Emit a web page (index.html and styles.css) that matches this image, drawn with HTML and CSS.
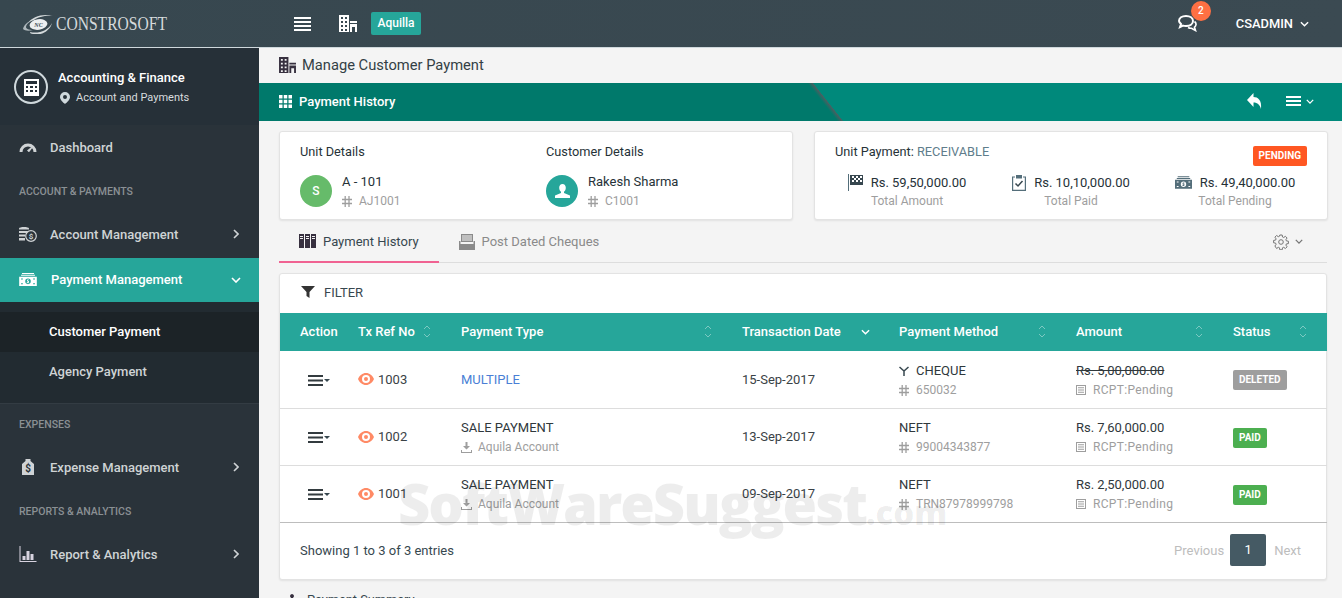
FILE: index.html
```html
<!DOCTYPE html>
<html lang="en">
<head>
<meta charset="utf-8">
<title>Manage Customer Payment</title>
<link rel="stylesheet" href="styles.css">
</head>
<body>
<svg class="defs" width="0" height="0" aria-hidden="true">
  <symbol id="bars" viewBox="0 0 15 11"><path d="M0 0h15v2H0zM0 4.500h15v2H0zM0 9h15v2H0z"/></symbol>
  <symbol id="hash" viewBox="0 0 10 11"><path d="M3.200 0v11M7 0v11M0 3.500h10M0 7.500h10" fill="none" stroke="currentColor" stroke-width="1.300"/></symbol>
  <symbol id="chev-d" viewBox="0 0 10 6"><path d="M1 1l4 4 4-4" fill="none" stroke="currentColor" stroke-width="1.600"/></symbol>
  <symbol id="chev-r" viewBox="0 0 6 10"><path d="M1 1l4 4-4 4" fill="none" stroke="currentColor" stroke-width="1.600"/></symbol>
  <symbol id="sort" viewBox="0 0 8 13"><path d="M1 4l3-3 3 3M1 9l3 3 3-3" fill="none" stroke="currentColor" stroke-width="1"/></symbol>
  <symbol id="eye" viewBox="0 0 16 12"><path fill-rule="evenodd" d="M8 0c3.500 0 6.500 2.500 8 6-1.500 3.500-4.500 6-8 6S1.500 9.500 0 6c1.500-3.500 4.500-6 8-6zm0 2a4 4 0 100 8 4 4 0 000-8zm0 2a2 2 0 110 4 2 2 0 010-4z"/></symbol>
  <symbol id="receipt" viewBox="0 0 10 10"><path fill-rule="evenodd" d="M0 0h10v10H0zm1 1v8h8V1zm1 1.300h6v1H2zm0 2.200h6v1H2zm0 2.200h6v1H2z"/></symbol>
  <symbol id="download" viewBox="0 0 11 11"><path d="M4.500 0h2v4H9L5.500 7.500 2 4h2.500zM0 8h1v2h9V8h1v3H0z"/></symbol>
  <symbol id="building" viewBox="0 0 18 17"><path fill-rule="evenodd" d="M0 0h10v17H0zm2 2v2h2V2zm4 0v2h2V2zM2 6v2h2V6zm4 0v2h2V6zm-4 4v2h2v-2zm4 0v2h2v-2zM2 14v2h2v-2zm4 0v2h2v-2zM11 6h7v2h-7zm0 3h7v8h-2v-5h-3v5h-2z"/></symbol>
  <symbol id="cash" viewBox="0 0 19 14"><path fill-rule="evenodd" d="M3 0h13v1H3zM2 2h15v1H2zM0 4h19v10H0zm9.500 2a3 3 0 100 6 3 3 0 000-6zM2 6v1h2V6zm13 0v1h2V6zM2 11v1h2v-1zm13 0v1h2v-1z"/><path d="M9 7h1.500v.7H9.500v.8h1v2H10v.5h-1v-.5H8.200v-.7h1.300v-.6h-1v-2H9z"/></symbol>
</svg>

<header class="topbar">
  <div class="brand">
    <svg class="brand-mark" viewBox="0 0 30 20" width="30" height="20">
      <path fill="#d5dadc" d="M5 9C9 3 20-1 30 2c-7-1-15 1-19 4-3 1-5 2-6 3z"/>
      <path fill="#aeb7bb" d="M0 15C1 11 4 8 8 7c-3 2-5 4-5 6 0 2 3 3 7 3-4 1-8 1-10-1z"/>
      <path fill="#d5dadc" d="M7 18c8 2 18-1 22-9-2 8-11 13-19 11-2 0-3-1-3-2z"/>
      <ellipse cx="15.500" cy="10.500" rx="9" ry="5.300" fill="#eceff1" transform="rotate(-8 15.500 10.500)"/>
      <text x="15.500" y="13" class="brand-nc">NC</text>
    </svg>
    <span class="brand-name">CONSTROSOFT</span>
  </div>
  <svg class="ic-menu" width="17" height="14" viewBox="0 0 17 14"><path d="M0 0h17v2H0zM0 4h17v2H0zM0 8h17v2H0zM0 12h17v2H0z" fill="#fff"/></svg>
  <svg class="ic-site" width="18" height="17"><use href="#building"/></svg>
  <span class="site-tag">Aquilla</span>
  <div class="top-right">
    <span class="chat">
      <svg width="19" height="17" viewBox="0 0 19 17"><path d="M8 1c4 0 7 2 7 5s-3 5-7 5c-1 0-2 0-3-.4L2 12l1-3C2 8 1 7 1 6c0-3 3-5 7-5z" fill="none" stroke="#fff" stroke-width="2"/><path d="M16.500 6.500c1.300 1 1.700 2 1.500 3.200-.2 1.200-.8 2-1.500 2.500l1 3.300-4-2.200c-1.300.1-2.500-.2-3.500-.8" fill="none" stroke="#fff" stroke-width="1.600"/></svg>
      <b class="chat-badge">2</b>
    </span>
    <span class="user">CSADMIN</span>
    <svg class="user-chev" width="9" height="6"><use href="#chev-d"/></svg>
  </div>
</header>

<div class="shell">
  <aside class="sidebar">
    <div class="module">
      <span class="module-ring">
        <svg width="15" height="17" viewBox="0 0 15 17"><path fill="#fff" fill-rule="evenodd" d="M0 0h15v17H0zm2 2v3h11V2zm0 5v2h2V7zm4 0v2h3V7zm5 0v2h2V7zm-9 4v2h2v-2zm4 0v2h3v-2zm5 0v2h2v-2z"/></svg>
      </span>
      <div>
        <div class="module-title">Accounting &amp; Finance</div>
        <div class="module-sub">
          <svg width="10" height="12" viewBox="0 0 10 12"><path fill="#cfd8dc" fill-rule="evenodd" d="M5 0a5 5 0 015 5c0 2.500-3 5.500-5 7-2-1.500-5-4.500-5-7a5 5 0 015-5zm0 3a2 2 0 100 4 2 2 0 000-4z"/></svg>
          Account and Payments
        </div>
      </div>
    </div>

    <a class="nav-item">
      <svg class="nav-ic" width="17" height="10" viewBox="0 0 17 10"><path d="M0 10a8.500 8.500 0 0117 0h-3a5.500 5.500 0 00-11 0z" fill="#cfd3d5"/><path d="M7.500 8.500l5-4 .8.8-3.800 5z" fill="#cfd3d5"/></svg>
      <span>Dashboard</span>
    </a>
    <div class="nav-label tight">ACCOUNT &amp; PAYMENTS</div>
    <a class="nav-item">
      <svg class="nav-ic" width="18" height="15" viewBox="0 0 18 15"><path d="M0 1.500C0 .500 2.500 0 5 0s5 .500 5 1.500v1H0zM0 4h9v2H0zM0 7.500h6v2H0zM0 11h6v2.500H0z" fill="#cfd3d5"/><circle cx="12" cy="9" r="5.300" fill="#2a333a" stroke="#cfd3d5" stroke-width="1.200"/><text x="12" y="11.800" class="nav-dollar">$</text></svg>
      <span>Account Management</span>
      <svg class="nav-chev" width="6" height="10"><use href="#chev-r"/></svg>
    </a>
    <a class="nav-item active">
      <svg class="nav-ic" width="18" height="13"><use href="#cash"/></svg>
      <span>Payment Management</span>
      <svg class="nav-chev-d" width="10" height="6"><use href="#chev-d"/></svg>
    </a>
    <div class="submenu">
      <a class="sub-item current">Customer Payment</a>
      <a class="sub-item">Agency Payment</a>
    </div>
    <div class="nav-label after-sub">EXPENSES</div>
    <a class="nav-item">
      <svg class="nav-ic" width="12" height="16" viewBox="0 0 12 16"><path d="M3.500 0h5v2L12 5v11H0V5l3.500-3z" fill="#cfd3d5"/><text x="6" y="13" class="nav-dollar big">$</text></svg>
      <span>Expense Management</span>
      <svg class="nav-chev" width="6" height="10"><use href="#chev-r"/></svg>
    </a>
    <div class="nav-label tight">REPORTS &amp; ANALYTICS</div>
    <a class="nav-item">
      <svg class="nav-ic" width="17" height="16" viewBox="0 0 17 16"><path d="M0 0h1v15h16v1H0zM3 10h3v4H3zM7 5h3v9H7zM11 8h3v6h-3z" fill="#d8d4e0"/></svg>
      <span>Report &amp; Analytics</span>
      <svg class="nav-chev" width="6" height="10"><use href="#chev-r"/></svg>
    </a>
  </aside>

  <main class="main">
    <div class="page-title">
      <svg width="17" height="16"><use href="#building"/></svg>
      <span>Manage Customer Payment</span>
    </div>
    <div class="band">
      <div class="band-left">
        <svg width="13" height="13" viewBox="0 0 13 13"><path fill="#fff" d="M0 0h3.500v3.500H0zM4.750 0h3.500v3.500h-3.500zM9.500 0H13v3.500H9.500zM0 4.750h3.500v3.500H0zM4.750 4.750h3.500v3.500h-3.500zM9.500 4.750H13v3.500H9.500zM0 9.500h3.500V13H0zM4.750 9.500h3.500V13h-3.500zM9.500 9.500H13V13H9.500z"/></svg>
        <span>Payment History</span>
      </div>
      <div class="band-actions">
        <svg width="15" height="16" viewBox="0 0 15 16"><path fill="#fff" d="M6.500 0v4C11 4 15 7 14 16c-1-4-3.500-6.500-7.500-6.500V14L0 7z"/></svg>
        <svg class="band-bars" width="15" height="10" viewBox="0 0 15 10"><path fill="#fff" d="M0 0h15v2H0zM0 4h15v2H0zM0 8h15v2H0z"/></svg>
        <svg class="band-chev" width="8" height="5"><use href="#chev-d"/></svg>
      </div>
    </div>

    <div class="content">
      <section class="cards">
        <div class="card card-people">
          <div class="person">
            <h3>Unit Details</h3>
            <div class="person-row">
              <span class="avatar green">S</span>
              <div>
                <div class="primary">A - 101</div>
                <div class="secondary"><svg class="hash" width="10" height="11"><use href="#hash"/></svg>AJ1001</div>
              </div>
            </div>
          </div>
          <div class="person">
            <h3>Customer Details</h3>
            <div class="person-row">
              <span class="avatar teal"><svg width="15" height="14" viewBox="0 0 15 14"><path fill="#fff" d="M7.500 0c2 0 3.300 1.500 3.300 3.700 0 1.800-.8 3.300-1.800 4v1.300L15 11.500V14H0v-2.500L6 9V7.700c-1-.7-1.800-2.200-1.800-4C4.200 1.500 5.500 0 7.500 0z"/></svg></span>
              <div>
                <div class="primary">Rakesh Sharma</div>
                <div class="secondary"><svg class="hash" width="10" height="11"><use href="#hash"/></svg>C1001</div>
              </div>
            </div>
          </div>
        </div>
        <div class="card card-totals">
          <div class="totals-head">
            <h3>Unit Payment: <em>RECEIVABLE</em></h3>
            <span class="badge pending">PENDING</span>
          </div>
          <div class="totals">
            <div class="total">
              <div class="total-value">
                <svg width="15" height="17" viewBox="0 0 15 17"><path fill="#546e7a" d="M0 0h1v17H0z"/><path fill="#37474f" fill-rule="evenodd" d="M2 1h13v10H2zm2 1v2h2V2zm4 0v2h2V2zm4 0v2h2V2zM6 4v2h2V4zm4 0v2h2V4zM4 6v2h2V6zm4 0v2h2V6zm4 0v2h2V6z"/></svg>
                Rs. 59,50,000.00
              </div>
              <div class="total-label">Total Amount</div>
            </div>
            <div class="total">
              <div class="total-value">
                <svg width="14" height="16" viewBox="0 0 14 16"><path fill="none" stroke="#546e7a" stroke-width="1.200" d="M3 2H.6v13.400h12.800V2H11"/><path fill="#546e7a" d="M4 0h6v3.500H4z"/><path fill="none" stroke="#37474f" stroke-width="1.500" d="M3.500 8.500l2.500 2.500 4.500-5"/></svg>
                Rs. 10,10,000.00
              </div>
              <div class="total-label">Total Paid</div>
            </div>
            <div class="total">
              <div class="total-value">
                <svg class="cash-ic" width="17" height="13"><use href="#cash"/></svg>
                Rs. 49,40,000.00
              </div>
              <div class="total-label">Total Pending</div>
            </div>
          </div>
        </div>
      </section>

      <nav class="tabs">
        <a class="tab active">
          <svg width="17" height="14" viewBox="0 0 17 14"><path fill-rule="evenodd" fill="#37303f" d="M0 0h5v14H0zm1 2v1h3V2zm0 2v1h3V4zM6 0h5v14H6zm1 2v1h3V2zm0 2v1h3V4zM12 0h5v14h-5zm1 2v1h3V2zm0 2v1h3V4z"/></svg>
          Payment History
        </a>
        <a class="tab">
          <svg width="16" height="16" viewBox="0 0 16 16"><path fill="#8a8a8a" fill-rule="evenodd" d="M2 0h12v8H2zm1 1.500v1h10v-1zm0 2v1h10v-1zm0 2v1h10v-1zM0 7h1.500v3h13V7H16v9H0z"/></svg>
          Post Dated Cheques
        </a>
        <span class="tab-settings">
          <svg width="16" height="16" viewBox="0 0 16 16"><circle cx="8" cy="8" r="2.300" fill="none" stroke="#757575"/><path fill="none" stroke="#757575" d="M6.800 1h2.400l.3 2 1.200.5 1.700-1.200 1.700 1.700-1.200 1.700.5 1.200 2 .3v2.400l-2 .3-.5 1.200 1.200 1.700-1.700 1.700-1.700-1.200-1.200.5-.3 2H6.800l-.3-2-1.200-.5-1.700 1.200L1.900 12l1.200-1.700-.5-1.200-2-.3V6.400l2-.3.5-1.200L1.900 3.200l1.700-1.700 1.700 1.200 1.200-.5z"/></svg>
          <svg class="settings-chev" width="8" height="5"><use href="#chev-d"/></svg>
        </span>
      </nav>

      <section class="table-card">
        <div class="filter">
          <svg width="14" height="12" viewBox="0 0 14 12"><path fill="#333" d="M0 0h14L8.500 6v6l-3-2V6z"/></svg>
          FILTER
        </div>
        <table class="grid">
          <colgroup>
            <col class="c-action"><col class="c-ref"><col class="c-type"><col class="c-date"><col class="c-method"><col class="c-amount"><col class="c-status">
          </colgroup>
          <thead>
            <tr>
              <th>Action</th>
              <th><span class="th-in">Tx Ref No<svg class="sort" width="8" height="13"><use href="#sort"/></svg></span></th>
              <th><span class="th-in">Payment Type<svg class="sort" width="8" height="13"><use href="#sort"/></svg></span></th>
              <th><span class="th-in">Transaction Date<svg class="sort-on" width="9" height="6"><use href="#chev-d"/></svg></span></th>
              <th><span class="th-in">Payment Method<svg class="sort" width="8" height="13"><use href="#sort"/></svg></span></th>
              <th><span class="th-in">Amount<svg class="sort" width="8" height="13"><use href="#sort"/></svg></span></th>
              <th><span class="th-in last">Status<svg class="sort" width="8" height="13"><use href="#sort"/></svg></span></th>
            </tr>
          </thead>
          <tbody>
            <tr>
              <td class="act"><svg width="15" height="11"><use href="#bars"/></svg><i class="caret"></i></td>
              <td><span class="ref"><svg class="eye" width="16" height="12"><use href="#eye"/></svg>1003</span></td>
              <td><a class="link">MULTIPLE</a></td>
              <td>15-Sep-2017</td>
              <td>
                <div class="primary-cell"><svg class="fork" width="10" height="10" viewBox="0 0 10 10"><path fill="none" stroke="#37474f" stroke-width="1.500" d="M.5 1L5 5l4.500-4M5 5v5"/></svg>CHEQUE</div>
                <div class="secondary"><svg class="hash" width="10" height="11"><use href="#hash"/></svg>650032</div>
              </td>
              <td>
                <div class="primary-cell"><s>Rs. 5,00,000.00</s></div>
                <div class="secondary"><svg class="rcpt" width="10" height="10"><use href="#receipt"/></svg><span class="rcpt-text">RCPT:Pending</span></div>
              </td>
              <td><span class="badge deleted">DELETED</span></td>
            </tr>
            <tr>
              <td class="act"><svg width="15" height="11"><use href="#bars"/></svg><i class="caret"></i></td>
              <td><span class="ref"><svg class="eye" width="16" height="12"><use href="#eye"/></svg>1002</span></td>
              <td>
                <div class="primary-cell">SALE PAYMENT</div>
                <div class="secondary"><svg class="rcpt dl" width="11" height="11"><use href="#download"/></svg>Aquila Account</div>
              </td>
              <td>13-Sep-2017</td>
              <td>
                <div class="primary-cell">NEFT</div>
                <div class="secondary"><svg class="hash" width="10" height="11"><use href="#hash"/></svg>99004343877</div>
              </td>
              <td>
                <div class="primary-cell">Rs. 7,60,000.00</div>
                <div class="secondary"><svg class="rcpt" width="10" height="10"><use href="#receipt"/></svg><span class="rcpt-text">RCPT:Pending</span></div>
              </td>
              <td><span class="badge paid">PAID</span></td>
            </tr>
            <tr>
              <td class="act"><svg width="15" height="11"><use href="#bars"/></svg><i class="caret"></i></td>
              <td><span class="ref"><svg class="eye" width="16" height="12"><use href="#eye"/></svg>1001</span></td>
              <td>
                <div class="primary-cell">SALE PAYMENT</div>
                <div class="secondary"><svg class="rcpt dl" width="11" height="11"><use href="#download"/></svg>Aquila Account</div>
              </td>
              <td>09-Sep-2017</td>
              <td>
                <div class="primary-cell">NEFT</div>
                <div class="secondary"><svg class="hash" width="10" height="11"><use href="#hash"/></svg>TRN87978999798</div>
              </td>
              <td>
                <div class="primary-cell">Rs. 2,50,000.00</div>
                <div class="secondary"><svg class="rcpt" width="10" height="10"><use href="#receipt"/></svg><span class="rcpt-text">RCPT:Pending</span></div>
              </td>
              <td><span class="badge paid">PAID</span></td>
            </tr>
          </tbody>
        </table>
        <div class="table-foot">
          <span>Showing 1 to 3 of 3 entries</span>
          <div class="pager">
            <span class="pg">Previous</span>
            <span class="pg-current">1</span>
            <span class="pg">Next</span>
          </div>
        </div>
      </section>

      <div class="summary-head">
        <svg width="8" height="12" viewBox="0 0 8 12"><path fill="#37303f" d="M4 0a2 2 0 011 3.700V12H3V3.700A2 2 0 014 0z"/></svg>
        Payment Summary
      </div>
    </div>
    <div class="watermark">SoftWareSuggest<small>.com</small></div>
  </main>
</div>
</body>
</html>
```
FILE: styles.css
```css
* { box-sizing: border-box; }
html, body { margin: 0; height: 598px; overflow: hidden; }
body { font-family: Roboto, "Liberation Sans", sans-serif; font-size: 13px; color: #37474f; background: #f4f4f4; }
.defs { position: absolute; }
svg { flex: none; display: block; fill: currentColor; }
a { color: inherit; text-decoration: none; }
h3 { margin: 0; font-size: 12.750px; font-weight: 400; line-height: 15px; color: #263238; }

.topbar { height: 48px; display: flex; align-items: center; color: #fff; background: linear-gradient(90deg, #37474f 0, #3b4a52 100%); border-bottom: 1px solid #cfd8dc; }
.brand { width: 293px; display: flex; align-items: center; padding-left: 23px; gap: 3px; }
.brand-nc { font: italic 700 6px "Liberation Serif", serif; text-anchor: middle; fill: #37474f; }
.brand-name { font-family: "Liberation Serif", serif; font-size: 19.500px; color: #d5dadc; transform: scaleX(.8); transform-origin: left; }
.ic-menu { margin-left: 1px; }
.ic-site { margin-left: 28px; }
.site-tag { margin-left: 14px; height: 23px; padding: 0 6.500px; background: #26a69a; border-radius: 2px; font-size: 12px; font-weight: 500; line-height: 23px; }
.top-right { margin-left: auto; display: flex; align-items: center; padding-right: 33px; }
.chat { position: relative; margin-right: 39px; }
.chat-badge { position: absolute; left: 13px; top: -14px; width: 20px; height: 20px; border-radius: 50%; background: #ff7043; font-size: 10px; font-weight: 500; line-height: 20px; text-align: center; }
.user { font-size: 12.900px; font-weight: 500; }
.user-chev { margin-left: 7px; margin-top: 1px; }

.shell { display: flex; height: 550px; }
.sidebar { width: 259px; flex: none; background: #2a333a; color: #cfd3d5; }
.module { height: 77px; display: flex; align-items: center; gap: 10px; padding: 1px 14px 0; background: #263038; color: #fff; }
.module-ring { width: 34px; height: 34px; border: 2px solid #cfd8dc; border-radius: 50%; display: flex; align-items: center; justify-content: center; }
.module-title { font-size: 13px; font-weight: 500; }
.module-sub { display: flex; align-items: center; gap: 6px; margin-top: 6px; font-size: 11px; color: #d8dcde; padding-left: 2px; }
.nav-item { height: 44px; display: flex; align-items: center; padding: 0 19px; font-weight: 500; font-size: 13px; }
.nav-item .nav-ic { margin-right: 13px; width: 18px; }
.nav-item > span { flex: 1; }
.nav-dollar { font: 700 8px Roboto, sans-serif; text-anchor: middle; fill: #cfd3d5; }
.nav-dollar.big { fill: #2a333a; font-size: 10px; }
.nav-chev { color: #cfd3d5; margin-right: 1px; }
.nav-chev-d { color: #fff; margin-right: -1px; }
.nav-label { height: 44px; display: flex; align-items: center; padding-left: 19px; font-size: 10.500px; font-weight: 500; color: #8a9094; }
.nav-label.tight { height: 43px; padding-top: 2px; }
.nav-label.after-sub { height: 42px; border-top: 1px solid #333c43; }
.nav-item.active { background: #26a69a; color: #fff; margin-top: 2px; padding-bottom: 1px; }
.nav-item.active .nav-ic { margin-right: 14px; }
.submenu { height: 101px; padding-top: 10px; background: #222b31; }
.sub-item { height: 40px; display: flex; align-items: center; padding: 0 0 1px 49px; font-weight: 500; font-size: 13px; }
.sub-item.current { background: #1c2327; color: #fff; }

.main { flex: 1; min-width: 0; position: relative; }
.page-title { height: 35px; display: flex; align-items: center; gap: 6px; padding: 0 0 1px 20px; font-size: 14.700px; color: #333f45; }
.page-title svg { color: #37303f; }
.band { height: 38px; display: flex; align-items: center; justify-content: space-between; padding: 0 28px 2px 20px; color: #fff; background: linear-gradient(51.700deg, #00796b 0, #00796b 454px, #4d5e60 458px, #00897b 458.500px); }
.band-left { display: flex; align-items: center; gap: 7px; font-weight: 500; font-size: 13px; }
.band-actions { display: flex; align-items: center; }
.band-bars { margin-left: 24px; }
.band-chev { margin-left: 5px; }

.content { padding: 10px 15px 0 20px; }
.cards { display: flex; gap: 21px; }
.card { height: 89px; background: #fff; border: 1px solid #e3e3e3; border-radius: 3px; box-shadow: 0 1px 2px rgba(0,0,0,.08); }
.card-people { width: 514px; flex: none; display: flex; padding: 12px 0 0 20px; }
.person { width: 246px; flex: none; }
.person-row { display: flex; align-items: center; gap: 10px; margin-top: 15px; }
.avatar { width: 32px; height: 32px; border-radius: 50%; display: flex; align-items: center; justify-content: center; color: #fff; font-size: 12px; font-weight: 500; }
.avatar.green { background: #66bb6a; }
.avatar.teal { background: #26a69a; }
.primary { color: #263238; font-size: 13px; line-height: 15px; }
.secondary { display: flex; align-items: center; margin-top: 4.500px; color: #9e9e9e; font-size: 12px; line-height: 15px; }
.hash { margin-right: 7px; color: #9e9e9e; }
.card-totals { flex: 1; padding: 12px 20px 0; }
.totals-head { display: flex; justify-content: space-between; }
.totals-head em { font-style: normal; color: #607d8b; }
.badge { display: inline-block; height: 20px; padding: 0 6px; border-radius: 2px; color: #fff; font-size: 10px; font-weight: 700; line-height: 20px; }
.badge.pending { background: #ff5722; margin: 2px 0 0; }
.badge.deleted { background: #9e9e9e; margin-top: 2px; }
.badge.paid { background: #4caf50; margin-top: 2px; }
.totals { display: grid; grid-template-columns: repeat(3, 164px); margin: 8px -10px 0; }
.total { text-align: center; }
.total-value { display: flex; justify-content: center; align-items: center; gap: 8px; color: #263238; height: 17px; }
.cash-ic { color: #546e7a; }
.total-label { color: #9e9e9e; font-size: 12px; line-height: 14px; margin-top: 3px; }

.tabs { height: 42px; display: flex; align-items: stretch; margin-top: 1px; border-bottom: 1px solid #ddd; }
.tab { display: flex; align-items: center; gap: 7px; padding: 0 20px; color: #8a8a8a; }
.tab.active { color: #37474f; border-bottom: 2px solid #f06292; margin-bottom: -1px; }
.tab-settings { margin-left: auto; display: flex; align-items: center; padding-right: 24px; }
.settings-chev { margin-left: 6px; color: #757575; }

.table-card { margin-top: 10px; height: 307px; background: #fff; border: 1px solid #e3e3e3; border-radius: 3px; box-shadow: 0 1px 2px rgba(0,0,0,.08); }
.filter { height: 39px; display: flex; align-items: center; gap: 9px; padding: 0 0 3px 21px; font-size: 13px; color: #37474f; }
.grid { width: 100%; border-collapse: collapse; table-layout: fixed; }
.c-action { width: 78px; } .c-ref { width: 103px; } .c-type { width: 281px; } .c-date { width: 157px; } .c-method { width: 177px; } .c-amount { width: 157px; } .c-status { width: 94px; }
.grid th { height: 38px; padding: 0 0 1px 20px; background: #26a69a; color: #fff; font-weight: 500; font-size: 13px; text-align: left; }
.grid th + th { padding-left: 0; }
.th-in { display: flex; align-items: center; justify-content: space-between; padding-right: 30px; }
.th-in.last { padding-right: 20px; }
.sort { color: rgba(255,255,255,.4); }
.sort-on { color: #fff; margin-right: -1px; }
.grid td { height: 57px; padding: 0; border-bottom: 1px solid #ddd; color: #3a4246; font-size: 13px; vertical-align: middle; }
.grid tbody tr:last-child td { border-bottom-color: #bdbdbd; }
.grid td.act { padding-left: 28px; }
.act { white-space: nowrap; }
.act svg { display: inline-block; color: #333b3f; vertical-align: middle; }
.caret { display: inline-block; margin-left: 1px; vertical-align: middle; border: 3px solid transparent; border-top-color: #37474f; border-bottom: 0; }
.ref { display: flex; align-items: center; gap: 4px; }
.eye { color: #ff8a65; }
.link { color: #4a7fd6; }
.primary-cell { display: flex; align-items: center; margin-top: 2px; line-height: 15px; color: #2f383c; }
.primary-cell s { color: inherit; }
.fork { margin-right: 7px; }
.rcpt { margin-right: 7px; color: #9e9e9e; }
.rcpt.dl { margin-right: 6px; }
.rcpt-text { letter-spacing: .33px; }
.table-foot { height: 55px; display: flex; align-items: center; justify-content: space-between; padding: 0 25px 0 20px; }
.pager { display: flex; align-items: center; }
.pg { color: #bdbdbd; }
.pg-current { width: 36px; height: 32px; margin: 0 8px 0 6px; border-radius: 2px; background: #455a64; color: #fff; text-align: center; line-height: 32px; font-size: 13px; }

.summary-head { display: flex; align-items: center; gap: 11px; margin-top: 12px; padding-left: 9px; font-size: 12.750px; color: #37474f; }

.watermark { position: absolute; left: 139px; top: 425px; font-family: "Open Sans", sans-serif; font-weight: 800; font-size: 56px; letter-spacing: -2px; line-height: 60px; color: rgba(0,0,0,.07); white-space: nowrap; pointer-events: none; }
.watermark small { font-size: 33px; letter-spacing: 0; }
```
